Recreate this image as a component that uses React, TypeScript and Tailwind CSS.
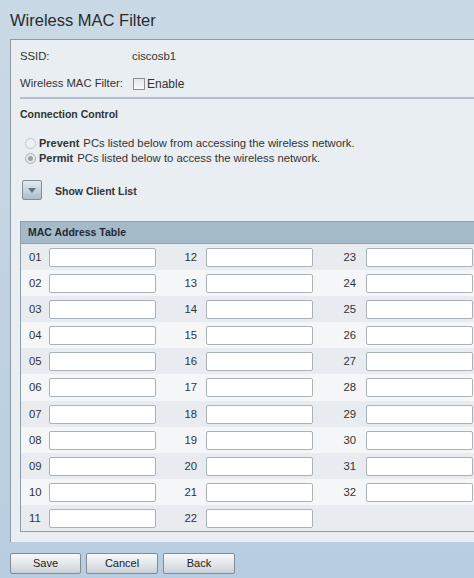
import React from "react";

const LEFT = ["01", "02", "03", "04", "05", "06", "07", "08", "09", "10", "11"];
const MID = ["12", "13", "14", "15", "16", "17", "18", "19", "20", "21", "22"];
const RIGHT = ["23", "24", "25", "26", "27", "28", "29", "30", "31", "32", ""];

const MacInput = () => (
  <input
    type="text"
    className="w-[107px] h-[19px] bg-white border border-[#a9b2ba] rounded-[2px] outline-none"
  />
);

const Button = ({ label, width }: { label: string; width: string }) => (
  <button
    className={`${width} h-[21px] border border-[#7f8c97] rounded-[2px] bg-gradient-to-b from-[#f7f8f9] via-[#e3e7eb] to-[#c9d1d8] text-[11px] text-[#222]`}
  >
    {label}
  </button>
);

export default function App() {
  return (
    <div
      className="w-[474px] h-[578px] overflow-hidden bg-gradient-to-b from-[#cad9e6] to-[#b8cde0] text-[11.3px] text-[#333]"
      style={{ fontFamily: '"Liberation Sans", Arial, sans-serif' }}
    >
      {/* title */}
      <div className="h-[39px] pl-[10px] pt-[9px] text-[16.5px] leading-[22px] text-[#2a2a2a]">
        Wireless MAC Filter
      </div>

      {/* panel */}
      <div className="ml-[10px] h-[503px] border-t border-l border-[#8e9aa5] bg-[#e8eef2] pl-[9px]">
        <div className="flex items-center h-[30px] pt-[2px]">
          <span className="w-[112px]">SSID:</span>
          <span>ciscosb1</span>
        </div>
        <div className="flex items-center h-[27px]">
          <span className="w-[113px]">Wireless MAC Filter:</span>
          <span className="w-[12px] h-[12px] border border-[#8a8f94] bg-gradient-to-b from-[#e4e7ea] to-[#fafafa] mr-[2px]"></span>
          <span className="text-[12px]">Enable</span>
        </div>
        <div className="h-[2px] bg-[#b5bed0]"></div>

        <div className="flex items-center h-[32px] font-bold text-[10.5px]">Connection Control</div>

        <div className="mt-[5px] pl-[5px]">
          <div className="flex items-center h-[15px]">
            <span className="w-[11px] h-[11px] rounded-full border border-[#c4c9ce] bg-[#eef0f2] mr-[3px]"></span>
            <span className="font-bold text-[11px] mr-[4px]">Prevent</span>
            <span>PCs listed below from accessing the wireless network.</span>
          </div>
          <div className="flex items-center h-[15px]">
            <span className="w-[11px] h-[11px] rounded-full border border-[#a8aeb4] bg-[#e6e9ec] mr-[3px] flex items-center justify-center">
              <span className="w-[5px] h-[5px] rounded-full bg-[#9aa1a8]"></span>
            </span>
            <span className="font-bold text-[11px] mr-[4px]">Permit</span>
            <span>PCs listed below to access the wireless network.</span>
          </div>
        </div>

        <div className="flex items-center mt-[14px] pl-[2px]">
          <span className="w-[20px] h-[20px] border border-[#7d8d9b] rounded-[2px] bg-gradient-to-b from-[#e3e9ee] to-[#aebcc8] flex items-center justify-center">
            <svg width="8" height="5" viewBox="0 0 8 5">
              <path d="M0 0 L8 0 L4 5 Z" fill="#5f7384" />
            </svg>
          </span>
          <span className="ml-[13px] font-bold text-[10.5px] pt-[3px]">Show Client List</span>
        </div>

        {/* MAC table */}
        <div className="mt-[21px] border-t border-l border-b border-[#8f9da8]">
          <div className="h-[22px] flex items-center pl-[7px] bg-[#a4bac9] border-b border-[#8fa2b0] font-bold text-[10.5px] text-[#1f2a33]">
            MAC Address Table
          </div>
          {LEFT.map((l, i) => (
            <div
              key={l}
              className={`flex items-center h-[26px] pl-[8px] ${
                i % 2 === 0 ? "bg-[#e8ecf0]" : "bg-[#f4f6f8]"
              } ${i === 5 ? "h-[27px]" : ""}`}
            >
              <span className="w-[20px]">{l}</span>
              <MacInput />
              <span className="w-[50px] text-right pr-[9px]">{MID[i]}</span>
              <MacInput />
              {RIGHT[i] !== "" && (
                <>
                  <span className="w-[53px] text-right pr-[10px]">{RIGHT[i]}</span>
                  <MacInput />
                </>
              )}
            </div>
          ))}
        </div>
      </div>

      {/* buttons */}
      <div className="flex gap-[5px] pl-[10px] mt-[11px]">
        <Button label="Save" width="w-[71px]" />
        <Button label="Cancel" width="w-[72px]" />
        <Button label="Back" width="w-[72px]" />
      </div>
    </div>
  );
}
